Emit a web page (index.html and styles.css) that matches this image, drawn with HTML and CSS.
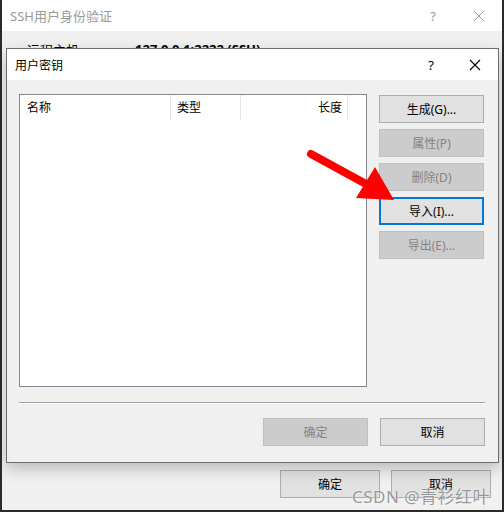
FILE: index.html
```html
<!DOCTYPE html>
<html lang="zh-CN">

<head>
    <meta charset="UTF-8">
    <title>用户密钥</title>
    <link rel="stylesheet" href="styles.css">
</head>

<body>
    <div class="window">
        <div class="title-bar inactive">
            <span class="title">SSH用户身份验证</span>
            <span class="help">?</span>
            <span class="close">
                <svg width="12" height="12" viewBox="0 0 12 12"><path d="M1 1L11 11M11 1L1 11" stroke="currentColor" stroke-width="1" /></svg>
            </span>
        </div>

        <div class="window-body">
            <div class="host-row">
                <span class="host-label">远程主机</span>
                <span class="host-value">127.0.0.1:2222 (SSH)</span>
            </div>

            <div class="window-buttons">
                <button class="btn wide">确定</button>
                <button class="btn wide">取消</button>
            </div>
        </div>

        <!-- 模态对话框 -->
        <div class="dialog">
            <div class="title-bar">
                <span class="title">用户密钥</span>
                <span class="help">?</span>
                <span class="close">
                    <svg width="12" height="12" viewBox="0 0 12 12"><path d="M1 1L11 11M11 1L1 11" stroke="currentColor" stroke-width="1.1" /></svg>
                </span>
            </div>

            <div class="dialog-body">
                <div class="keys">
                    <div class="key-list">
                        <div class="list-head">
                            <span class="col col-name">名称</span>
                            <span class="col col-type">类型</span>
                            <span class="col col-len">长度</span>
                        </div>
                    </div>

                    <div class="side-buttons">
                        <button class="btn">生成(G)...</button>
                        <button class="btn" disabled>属性(P)</button>
                        <button class="btn" disabled>删除(D)</button>
                        <button class="btn focused">导入(I)...</button>
                        <button class="btn" disabled>导出(E)...</button>
                    </div>
                </div>

                <div class="separator"></div>

                <div class="dialog-buttons">
                    <button class="btn" disabled>确定</button>
                    <button class="btn">取消</button>
                </div>
            </div>
        </div>

        <svg class="arrow" width="504" height="512" viewBox="0 0 504 512">
            <line x1="311" y1="154" x2="366" y2="184" stroke="#ff0000" stroke-width="8" stroke-linecap="round" />
            <polygon points="394,200 356,198 375,167" fill="#ff0000" />
        </svg>

        <div class="watermark">CSDN @青衫红叶</div>
    </div>
</body>

</html>
```

FILE: styles.css
```css
* {
    margin: 0;
    padding: 0;
    box-sizing: border-box;
}

body {
    width: 504px;
    height: 512px;
    overflow: hidden;
    background: #f0f0f0;
    font-family: "Noto Sans", "Noto Sans CJK SC", sans-serif;
    font-size: 12px;
    color: #000;
}

.window {
    position: relative;
    width: 504px;
    height: 512px;
    border-left: 2px solid #2b2b2b;
    border-right: 2px solid #2b2b2b;
    border-bottom: 2px solid #2b2b2b;
    display: flex;
    flex-direction: column;
}

.title-bar {
    display: flex;
    align-items: center;
    height: 31px;
    background: #fff;
    flex-shrink: 0;
}

.title-bar .title {
    flex: 1;
    padding-left: 8px;
    font-size: 12px;
}

.title-bar .help {
    width: 44px;
    text-align: center;
    font-size: 13px;
}

.title-bar .close {
    width: 44px;
    margin-right: 1px;
    display: flex;
    justify-content: center;
}

.title-bar.inactive {
    height: 31px;
    color: #999;
}

.title-bar.inactive .title {
    font-size: 13px;
}

.title-bar.inactive .help {
    margin-right: 2px;
}

.window-body {
    flex: 1;
    display: flex;
    flex-direction: column;
    justify-content: space-between;
    padding: 9px 10px 12px 25px;
}

.host-row {
    display: flex;
    gap: 56px;
    font-size: 13px;
}

.host-value {
    font-weight: bold;
}

.window-buttons {
    display: flex;
    justify-content: flex-end;
    gap: 11px;
    padding-right: 1px;
}

.btn {
    height: 28px;
    width: 106px;
    background: #e1e1e1;
    border: 1px solid #adadad;
    font-family: "Noto Sans", "Noto Sans CJK SC", sans-serif;
    font-size: 12px;
    color: #000;
}

.btn.wide {
    width: 100px;
}

.btn:disabled {
    background: #cccccc;
    border-color: #bfbfbf;
    color: #838383;
}

.btn.focused {
    border: 2px solid #0078d7;
}

/* 对话框 */
.dialog {
    position: absolute;
    left: 4px;
    top: 48px;
    width: 493px;
    height: 415px;
    border: 1px solid #6e6e6e;
    background: #f0f0f0;
    box-shadow: 0 6px 14px rgba(0, 0, 0, 0.22);
    display: flex;
    flex-direction: column;
}

.dialog-body {
    flex: 1;
    padding: 14px 13px 0 12px;
}

.keys {
    display: flex;
    gap: 12px;
}

.key-list {
    width: 348px;
    height: 293px;
    background: #fff;
    border: 1px solid #828790;
}

.list-head {
    display: flex;
    height: 25px;
    align-items: center;
}

.col {
    height: 25px;
    line-height: 25px;
    border-right: 1px solid #e5e5e5;
}

.col-name {
    width: 151px;
    padding-left: 7px;
}

.col-type {
    width: 70px;
    padding-left: 6px;
}

.col-len {
    width: 107px;
    text-align: right;
    padding-right: 5px;
}

.side-buttons {
    display: flex;
    flex-direction: column;
    gap: 6px;
    padding-top: 1px;
}

.side-buttons .btn {
    width: 105px;
}

.separator {
    margin-top: 15px;
    height: 2px;
    border-top: 1px solid #a0a0a0;
    border-bottom: 1px solid #fff;
}

.dialog-buttons {
    display: flex;
    justify-content: flex-end;
    gap: 12px;
    margin-top: 14px;
}

.dialog-buttons .btn {
    width: 105px;
}

.arrow {
    position: absolute;
    left: -2px;
    top: 0;
    pointer-events: none;
}

.watermark {
    position: absolute;
    left: 350px;
    top: 483px;
    font-size: 17px;
    color: rgba(120, 120, 120, 0.75);
    text-shadow: 0 0 2px #fff;
    letter-spacing: 0.5px;
}
```
